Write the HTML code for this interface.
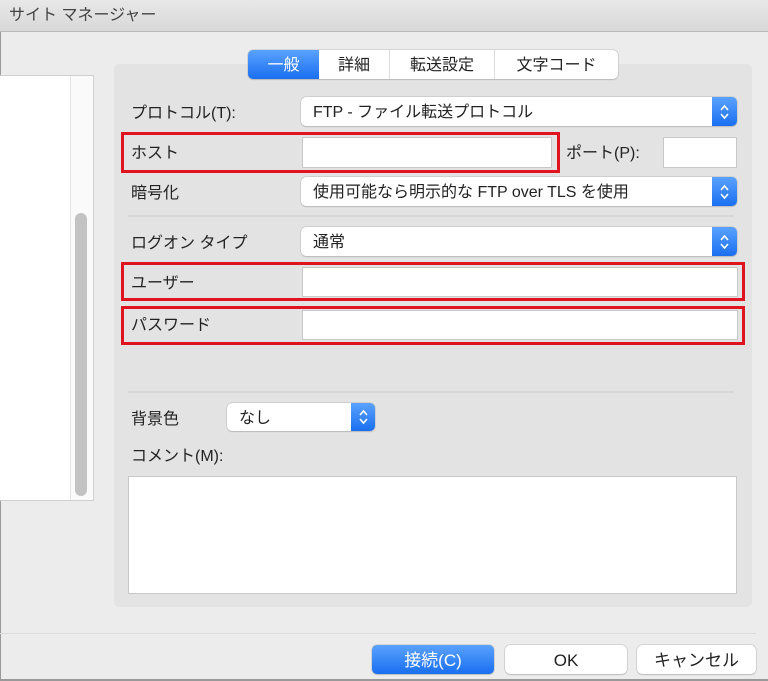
<!DOCTYPE html>
<html><head><meta charset="utf-8"><style>
*{box-sizing:border-box;margin:0;padding:0}
body{width:768px;height:681px;overflow:hidden;background:#ececec;font-family:"Liberation Sans","Noto Sans CJK JP",sans-serif;color:#222;position:relative;font-size:16px}
.a{position:absolute}
.lbl{position:absolute;font-size:16px;line-height:20px;color:#222}
.inp{position:absolute;background:#fff;border:1px solid #c8c8c8}
.sel{position:absolute;background:#fff;border-radius:5px;box-shadow:0 0 0 .5px #bbb,0 1px 1px rgba(0,0,0,.2);font-size:16px;line-height:31px;padding-left:12px;overflow:hidden}
.arr{position:absolute;right:0;top:0;bottom:0;width:25px;background:linear-gradient(#5aa2ff,#1a6ff0)}
.arr svg{position:absolute;left:7px;top:50%;margin-top:-9px}
.red{position:absolute;border:3px solid #e0141e}
.btn{position:absolute;height:29px;border-radius:5px;background:#fff;box-shadow:0 0 0 .5px #bbb,0 1px 1px rgba(0,0,0,.2);text-align:center;line-height:31px;font-size:17px}
.tab{position:absolute;top:50px;height:29px;line-height:29px;text-align:center;font-size:16px;border-right:1px solid #ddd}
</style></head><body>
<div class="a" style="left:0;top:0;width:768px;height:32px;background:linear-gradient(#e8e8e8,#d8d8d8);border-bottom:1px solid #b8b8b8"></div>
<div class="lbl" style="left:9px;top:6px;font-size:16px;color:#444">サイト マネージャー</div>
<div class="a" style="left:0;top:32px;width:1px;height:649px;background:#999"></div>
<div class="a" style="left:0;top:679px;width:768px;height:2px;background:#999"></div>

<div class="a" style="left:0;top:75px;width:94px;height:426px;background:#fff;border:1px solid #d0d0d0;border-left:none"></div>
<div class="a" style="left:70px;top:76px;width:23px;height:424px;background:#fafafa;border-left:1px solid #e5e5e5"></div>
<div class="a" style="left:75px;top:213px;width:12px;height:283px;background:#c2c2c2;border-radius:6px"></div>

<div class="a" style="left:114px;top:64px;width:638px;height:543px;background:#e3e3e3;border-radius:5px"></div>

<div class="a" style="left:248px;top:50px;width:370px;height:29px;background:#fff;border-radius:5px;box-shadow:0 0 0 .5px #bbb,0 1px 1px rgba(0,0,0,.2)"></div>
<div class="tab" style="left:248px;width:71px;background:linear-gradient(#5aa2ff,#1a6ff0);color:#fff;border-radius:5px 0 0 5px;border:none;line-height:31px">一般</div>
<div class="tab" style="left:319px;width:71px;line-height:31px">詳細</div>
<div class="tab" style="left:390px;width:105px;line-height:31px">転送設定</div>
<div class="tab" style="left:495px;width:123px;border:none;line-height:31px">文字コード</div>

<div class="lbl" style="left:131px;top:104px">プロトコル(T):</div>
<div class="sel" style="left:301px;top:97px;width:436px;height:29px">FTP - ファイル転送プロトコル<div class="arr"><svg width="11" height="18" viewBox="0 0 11 18"><path d="M2 7L5.5 3L9 7M2 11L5.5 15L9 11" fill="none" stroke="#fff" stroke-width="1.6"/></svg></div></div>

<div class="red" style="left:121px;top:132px;width:439px;height:41px"></div>
<div class="lbl" style="left:131px;top:144px">ホスト</div>
<div class="inp" style="left:302px;top:137px;width:250px;height:31px"></div>
<div class="lbl" style="left:566px;top:144px">ポート(P):</div>
<div class="inp" style="left:663px;top:137px;width:74px;height:31px"></div>

<div class="lbl" style="left:131px;top:184px">暗号化</div>
<div class="sel" style="left:301px;top:177px;width:436px;height:29px">使用可能なら明示的な FTP over TLS を使用<div class="arr"><svg width="11" height="18" viewBox="0 0 11 18"><path d="M2 7L5.5 3L9 7M2 11L5.5 15L9 11" fill="none" stroke="#fff" stroke-width="1.6"/></svg></div></div>

<div class="a" style="left:128px;top:215px;width:606px;height:2px;background:#d6d6d6"></div>

<div class="lbl" style="left:131px;top:234px">ログオン タイプ</div>
<div class="sel" style="left:301px;top:227px;width:436px;height:29px">通常<div class="arr"><svg width="11" height="18" viewBox="0 0 11 18"><path d="M2 7L5.5 3L9 7M2 11L5.5 15L9 11" fill="none" stroke="#fff" stroke-width="1.6"/></svg></div></div>

<div class="red" style="left:121px;top:262px;width:624px;height:39px"></div>
<div class="lbl" style="left:131px;top:274px">ユーザー</div>
<div class="inp" style="left:302px;top:267px;width:436px;height:30px"></div>

<div class="red" style="left:121px;top:306px;width:624px;height:39px"></div>
<div class="lbl" style="left:131px;top:316px">パスワード</div>
<div class="inp" style="left:302px;top:310px;width:436px;height:30px"></div>

<div class="a" style="left:128px;top:391px;width:606px;height:2px;background:#d6d6d6"></div>

<div class="lbl" style="left:131px;top:410px">背景色</div>
<div class="sel" style="left:227px;top:403px;width:148px;height:28px">なし<div class="arr" style="width:24px"><svg width="11" height="18" viewBox="0 0 11 18"><path d="M2 7L5.5 3L9 7M2 11L5.5 15L9 11" fill="none" stroke="#fff" stroke-width="1.6"/></svg></div></div>

<div class="lbl" style="left:131px;top:447px">コメント(M):</div>
<div class="inp" style="left:128px;top:476px;width:609px;height:118px"></div>

<div class="a" style="left:0;top:633px;width:756px;height:1px;background:#dcdcdc"></div>
<div class="btn" style="left:372px;top:645px;width:122px;background:linear-gradient(#5aa2ff,#1a6ff0);color:#fff">接続(C)</div>
<div class="btn" style="left:505px;top:645px;width:122px">OK</div>
<div class="btn" style="left:637px;top:645px;width:119px">キャンセル</div>
</body></html>
